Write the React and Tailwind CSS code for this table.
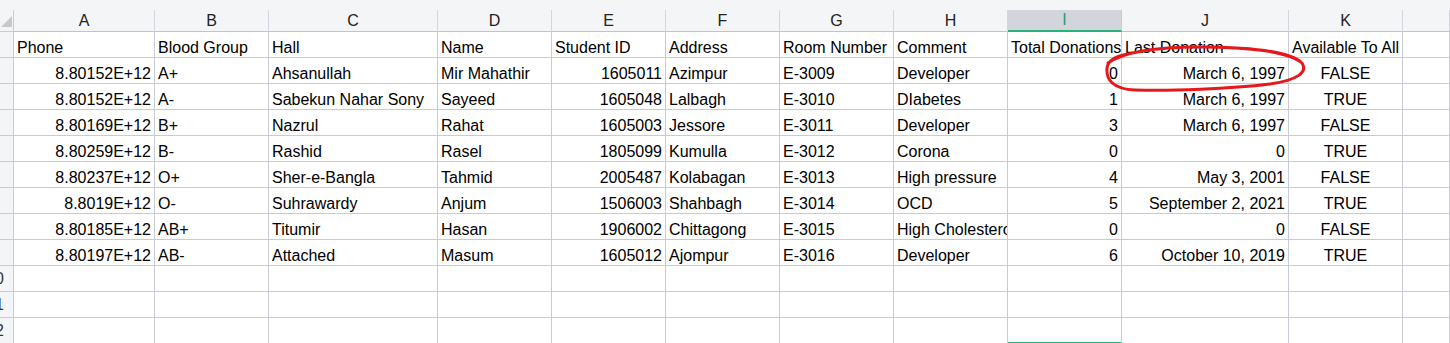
import React from "react";

const cols = [
  { letter: "A", head: "Phone", align: "right" },
  { letter: "B", head: "Blood Group", align: "left" },
  { letter: "C", head: "Hall", align: "left" },
  { letter: "D", head: "Name", align: "left" },
  { letter: "E", head: "Student ID", align: "right" },
  { letter: "F", head: "Address", align: "left" },
  { letter: "G", head: "Room Number", align: "left" },
  { letter: "H", head: "Comment", align: "left" },
  { letter: "I", head: "Total Donations", align: "right" },
  { letter: "J", head: "Last Donation", align: "right" },
  { letter: "K", head: "Available To All", align: "center" },
  { letter: "", head: "", align: "left" },
];

const rows = [
  ["8.80152E+12", "A+", "Ahsanullah", "Mir Mahathir", "1605011", "Azimpur", "E-3009", "Developer", "0", "March 6, 1997", "FALSE"],
  ["8.80152E+12", "A-", "Sabekun Nahar Sony", "Sayeed", "1605048", "Lalbagh", "E-3010", "DIabetes", "1", "March 6, 1997", "TRUE"],
  ["8.80169E+12", "B+", "Nazrul", "Rahat", "1605003", "Jessore", "E-3011", "Developer", "3", "March 6, 1997", "FALSE"],
  ["8.80259E+12", "B-", "Rashid", "Rasel", "1805099", "Kumulla", "E-3012", "Corona", "0", "0", "TRUE"],
  ["8.80237E+12", "O+", "Sher-e-Bangla", "Tahmid", "2005487", "Kolabagan", "E-3013", "High pressure", "4", "May 3, 2001", "FALSE"],
  ["8.8019E+12", "O-", "Suhrawardy", "Anjum", "1506003", "Shahbagh", "E-3014", "OCD", "5", "September 2, 2021", "TRUE"],
  ["8.80185E+12", "AB+", "Titumir", "Hasan", "1906002", "Chittagong", "E-3015", "High Cholesterol", "0", "0", "FALSE"],
  ["8.80197E+12", "AB-", "Attached", "Masum", "1605012", "Ajompur", "E-3016", "Developer", "6", "October 10, 2019", "TRUE"],
];

const alignClass = {
  left: "justify-start pl-[3px]",
  right: "justify-end pr-[3px]",
  center: "justify-center",
};

function Cell({ children, align = "left", extra = "" }) {
  return (
    <div
      className={`h-[26px] flex items-end overflow-hidden whitespace-nowrap border-r border-b border-[#c8cbd6] bg-white ${alignClass[align]} ${extra}`}
    >
      {children}
    </div>
  );
}

function RowHead({ label }) {
  return (
    <div className="h-[26px] flex items-center justify-end pr-[9px] overflow-hidden border-r border-b border-[#c8cbd6] bg-[#f4f5f7] text-[#333]">
      {label}
    </div>
  );
}

export default function App() {
  const blanks = [10, 11, 12];

  return (
    <div
      className="relative w-[1450px] h-[343px] overflow-hidden bg-white text-[16px] leading-[18px] text-black"
      style={{ fontFamily: '"Liberation Sans", Arial, sans-serif' }}
    >
      <div className="grid grid-cols-[14px_141px_114px_169px_114px_114px_114px_114px_114px_114px_167px_114px_1fr]">
        {/* Column headers */}
        <div className="h-[32px] bg-[#f4f5f7] flex flex-col">
          <div className="h-[10px]" />
          <div className="relative h-[22px] border-r border-b border-[#c8cbd6]">
            <svg className="absolute left-0 top-[6px]" width="13" height="12" viewBox="0 0 13 12">
              <polygon points="12,0 12,11 1,11" fill="#c6c8cc" />
            </svg>
          </div>
        </div>
        {cols.map((c, i) => (
          <div key={"h" + i} className="h-[32px] bg-[#f4f5f7] flex flex-col">
            <div className="h-[10px]" />
            {c.letter === "I" ? (
              <div className="h-[22px] flex items-end justify-center pb-[1px] bg-[#d2d5dc] border-r border-[#c8cbd6] border-b-2 border-b-[#21b57a] text-[#1f9e6a]">
                I
              </div>
            ) : (
              <div className="h-[22px] flex items-end justify-center pb-[1px] border-r border-b border-r-[#d3d6de] border-b-[#bfc3cf] text-[#222]">
                {c.letter}
              </div>
            )}
          </div>
        ))}

        {/* Field names */}
        <RowHead label="" />
        {cols.map((c, i) => (
          <Cell key={"f" + i}>{c.head}</Cell>
        ))}

        {/* Records */}
        {rows.map((r, ri) => (
          <React.Fragment key={"r" + ri}>
            <RowHead label="" />
            {r.map((v, ci) => (
              <Cell key={ci} align={cols[ci].align}>
                {v}
              </Cell>
            ))}
            <Cell />
          </React.Fragment>
        ))}

        {/* Empty rows */}
        {blanks.map((n) => (
          <React.Fragment key={"b" + n}>
            <RowHead label={n} />
            {cols.map((c, ci) => (
              <Cell
                key={ci}
                extra={n === 12 && c.letter === "I" ? "relative" : ""}
              >
                {n === 12 && c.letter === "I" && (
                  <span className="absolute left-[-1px] right-[-1px] bottom-[-1px] h-[2px] bg-[#21b57a]" />
                )}
              </Cell>
            ))}
          </React.Fragment>
        ))}
      </div>

      {/* Hand-drawn red marker loop */}
      <svg
        className="absolute left-0 top-0 pointer-events-none"
        width="1450"
        height="343"
        viewBox="0 0 1450 343"
      >
        <path
          d="M 1108 63 C 1125 51, 1160 47, 1200 47 C 1250 47, 1290 52, 1302 63 C 1308 72, 1298 80, 1270 84 C 1230 89, 1170 91, 1135 90 C 1112 89, 1106 79, 1107 68 C 1108 60, 1116 56, 1128 54"
          fill="none"
          stroke="#e5191b"
          strokeWidth="3"
          strokeLinecap="round"
        />
      </svg>
    </div>
  );
}
